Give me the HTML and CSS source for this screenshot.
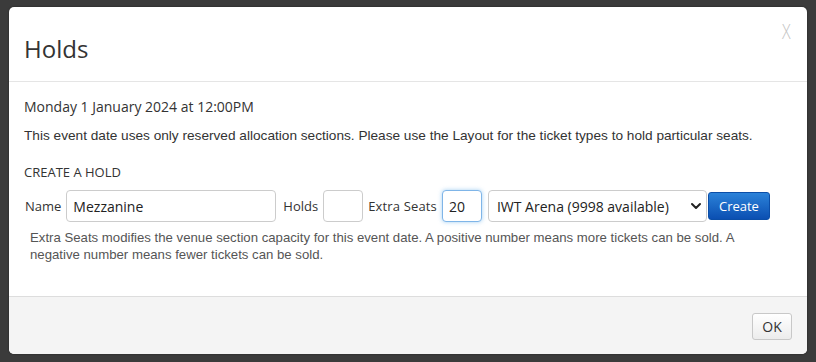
FILE: index.html
```html
<!DOCTYPE html>
<html>
<head>
<meta charset="utf-8">
<link rel="stylesheet" href="styles.css">
</head>
<body>
<div class="modal">
  <div class="modal-header">
    <h1 class="title">Holds</h1>
    <span class="close">X</span>
  </div>
  <div class="modal-body">
    <p class="date">Monday 1 January 2024 at 12:00PM</p>
    <p class="info">This event date uses only reserved allocation sections. Please use the Layout for the ticket types to hold particular seats.</p>
    <p class="section">CREATE A HOLD</p>
    <div class="row">
      <label class="lbl lbl-name">Name</label>
      <input class="field f-name" type="text" value="Mezzanine">
      <label class="lbl lbl-holds">Holds</label>
      <input class="field f-holds" type="text" value="">
      <label class="lbl lbl-extra">Extra Seats</label>
      <input class="field f-extra" type="text" value="20">
      <div class="select">
        <span>IWT Arena (9998 available)</span>
        <svg width="12" height="8" viewBox="0 0 12 8"><path d="M2 2 L6 6 L10 2" fill="none" stroke="#222" stroke-width="2" stroke-linecap="round" stroke-linejoin="round"/></svg>
      </div>
      <button class="btn-create">Create</button>
    </div>
    <p class="help">Extra Seats modifies the venue section capacity for this event date. A positive number means more tickets can be sold. A negative number means fewer tickets can be sold.</p>
  </div>
  <div class="modal-footer">
    <button class="btn-ok">OK</button>
  </div>
</div>
</body>
</html>
```
FILE: styles.css
```css
html, body {
  margin: 0;
  padding: 0;
  background: #3b3b3b;
  height: 362px;
  overflow: hidden;
}
.modal {
  position: relative;
  margin: 7px 0 0 9px;
  width: 798px;
  background: #fff;
  border-radius: 5px;
  overflow: hidden;
  box-shadow: 0 0 2px rgba(0,0,0,0.5);
  font-family: "Open Sans", sans-serif;
  color: #333;
}
.modal-header {
  position: relative;
  padding: 29px 15px 19px;
  border-bottom: 1px solid #e5e5e5;
}
.title {
  margin: 0;
  font-size: 24px;
  line-height: 26px;
  font-weight: 400;
  color: #333;
}
.close {
  position: absolute;
  top: 13px;
  right: 15px;
  font-size: 20px;
  font-weight: 300;
  color: #c4c4c4;
  line-height: 24px;
  transform: scaleX(0.8);
}
.modal-body {
  padding: 15px 15px 33px;
}
.date {
  margin: 0 0 10px;
  font-size: 14px;
  line-height: 20px;
}
.info {
  margin: 0 0 18px;
  font-family: "Liberation Sans", Arial, sans-serif;
  font-size: 13.65px;
  line-height: 18px;
  color: #333;
}
.section {
  margin: 0 0 9px;
  font-size: 13px;
  line-height: 18px;
}
.row {
  display: flex;
  align-items: center;
  height: 32px;
}
.lbl {
  font-size: 13px;
  line-height: 18px;
  color: #333;
  padding-left: 1px;
}
.lbl-name { margin-right: 5px; }
.lbl-holds { margin: 0 5px 0 6px; }
.lbl-extra { margin: 0 5px 0 4px; letter-spacing: 0.15px; }
.field {
  box-sizing: border-box;
  height: 32px;
  border: 1px solid #ccc;
  border-radius: 4px;
  padding: 0 6px;
  font-family: "Open Sans", sans-serif;
  font-size: 14px;
  color: #222;
  background: #fff;
  outline: none;
}
.f-name { width: 210px; }
.f-holds { width: 40px; }
.f-extra {
  width: 40px;
  border-color: #7fb5e8;
  box-shadow: 0 0 4px rgba(102,175,233,0.6);
}
.select {
  box-sizing: border-box;
  margin-left: 6px;
  width: 219px;
  height: 32px;
  border: 1px solid #ccc;
  border-radius: 4px;
  display: flex;
  align-items: center;
  justify-content: space-between;
  padding: 0 4px 0 8px;
  font-size: 14px;
  color: #222;
}
.btn-create {
  margin-left: 1px;
  width: 62px;
  height: 28px;
  border: 1px solid #0b4ea8;
  border-radius: 3px;
  background: linear-gradient(#2b82d9, #0b4fb2);
  color: #fff;
  font-family: "Open Sans", sans-serif;
  font-size: 13px;
  padding: 0;
}
.help {
  margin: 7px 0 0 6px;
  width: 740px;
  font-family: "Liberation Sans", Arial, sans-serif;
  font-size: 13.2px;
  line-height: 17px;
  color: #555;
}
.modal-footer {
  border-top: 1px solid #ddd;
  background: #f4f4f4;
  height: 57px;
  display: flex;
  align-items: center;
  justify-content: flex-end;
  padding: 0 15px;
}
.btn-ok {
  width: 40px;
  height: 27px;
  margin-top: 1px;
  border: 1px solid #c8c8c8;
  border-radius: 3px;
  background: linear-gradient(#fff, #ececec);
  font-family: "Open Sans", sans-serif;
  font-size: 14px;
  font-weight: 400;
  color: #333;
  padding: 0;
}
```
